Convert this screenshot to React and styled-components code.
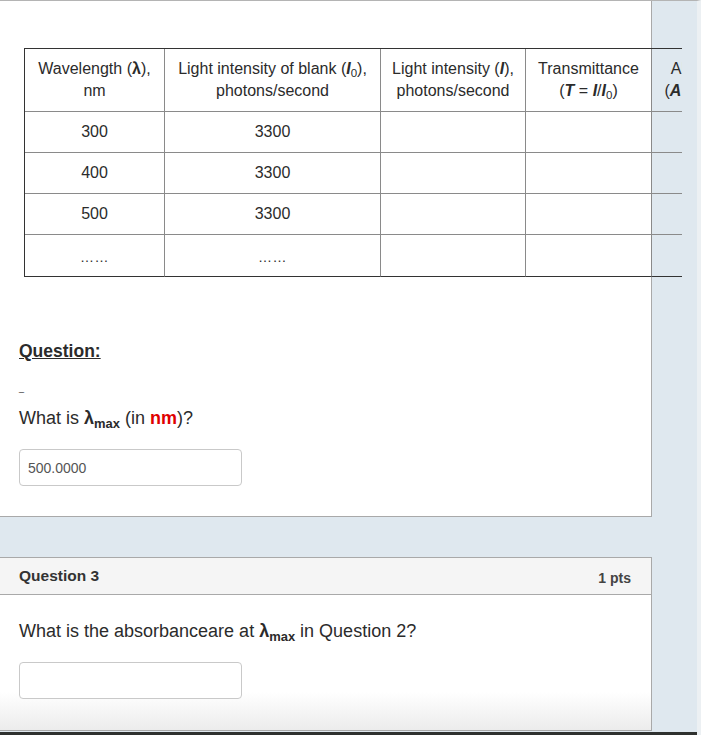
import React from 'react'
import styled, { createGlobalStyle } from 'styled-components'

const GlobalStyle = createGlobalStyle`
  html, body {
    margin: 0;
    padding: 0;
    background: #dfe8ef;
  }
  body {
    font-family: 'Liberation Sans', Arial, Helvetica, sans-serif;
    color: #2b2b2b;
  }
  * { box-sizing: border-box; }
`

const Page = styled.div`
  width: 701px;
  height: 735px;
  overflow: hidden;
  border-top: 1px solid #b4b4b4;
  border-right: 4px solid #ecf0f3;
  display: flex;
  flex-direction: column;
`

const Card = styled.div`
  width: 652px;
  background: #fff;
  border-right: 1px solid #a9a9a9;
  border-bottom: 1px solid #a9a9a9;
  border-top: ${p => (p.$top ? '1px solid #a9a9a9' : 'none')};
  margin-top: ${p => p.$gap || 0}px;
`

const CardBody = styled.div`
  padding: ${p => p.$pad};
  background: ${p => p.$fade ? 'linear-gradient(to bottom, #fff 0%, #fff 72%, #ececec 100%)' : '#fff'};
`

const TableClip = styled.div`
  margin: 47px 0 0 5px;
  width: 658px;
  overflow: hidden;
`

const Table = styled.table`
  width: 752px;
  table-layout: fixed;
  border-collapse: separate;
  border-spacing: 0;
  border-left: 1px solid #333;
  border-top: 1px solid #333;
  font-size: 16px;
  line-height: 22px;
  color: #2b2b2b;
`

const Th = styled.th`
  font-weight: normal;
  height: 63px;
  padding: 0 4px;
  text-align: center;
  vertical-align: middle;
  white-space: nowrap;
  border-right: 1px solid #8a8a8a;
  border-bottom: 1px solid #8a8a8a;
`

const Td = styled.td`
  height: ${p => (p.$last ? 42 : 41)}px;
  padding: 0 4px;
  text-align: center;
  vertical-align: middle;
  border-right: 1px solid #8a8a8a;
  border-bottom: 1px solid ${p => (p.$last ? '#333' : '#8a8a8a')};
`

const Dots = styled.span`
  font-size: 14px;
  letter-spacing: 0.5px;
  position: relative;
  top: 1px;
`

const Sym = styled.b`
  font-style: ${p => (p.$italic ? 'italic' : 'normal')};
`

const Sub = styled.sub`
  font-size: 0.72em;
  font-weight: ${p => (p.$bold ? 'bold' : 'normal')};
  vertical-align: -0.3em;
  line-height: 0;
`

const Heading = styled.p`
  margin: 62px 0 0;
  font-size: 17.5px;
  line-height: 24px;
  font-weight: bold;
  text-decoration: underline;
`

const Dash = styled.p`
  margin: 20px 0 0;
  font-size: 9px;
  line-height: 10px;
  height: 10px;
`

const Prompt = styled.p`
  margin: ${p => p.$top}px 0 0;
  font-size: 18px;
  line-height: 24px;
`

const Red = styled.b`
  color: #e00000;
`

const Answer = styled.div`
  margin-top: 19px;
  width: 223px;
  height: 37px;
  border: 1px solid #c9c9c9;
  border-radius: 4px;
  background: #fff;
  padding: 0 8px;
  display: flex;
  align-items: center;
  font-size: 14px;
  color: #555;
`

const QHeader = styled.div`
  height: 37px;
  background: #f5f5f5;
  border-bottom: 1px solid #a9a9a9;
  padding: 0 20px 0 19px;
  display: flex;
  align-items: center;
  justify-content: space-between;
`

const QTitle = styled.span`
  font-size: 15.5px;
  font-weight: bold;
  color: #333;
`

const Pts = styled.span`
  font-size: 14px;
  font-weight: bold;
  color: #444;
  margin-top: 3px;
`

const BottomBar = styled.div`
  margin-top: 1px;
  height: 4px;
  width: 705px;
  background: #2f312f;
`

const rows = [
  ['300', '3300'],
  ['400', '3300'],
  ['500', '3300'],
]

const DataTable = () => (
  <TableClip>
    <Table>
      <colgroup>
        <col style={{ width: 140 }} />
        <col style={{ width: 216 }} />
        <col style={{ width: 145 }} />
        <col style={{ width: 126 }} />
        <col style={{ width: 124 }} />
      </colgroup>
      <thead>
        <tr>
          <Th>Wavelength (<Sym>λ</Sym>),<br />nm</Th>
          <Th>Light intensity of blank (<Sym $italic>I</Sym><Sub>0</Sub>),<br />photons/second</Th>
          <Th>Light intensity (<Sym $italic>I</Sym>),<br />photons/second</Th>
          <Th>Transmittance<br />(<Sym $italic>T</Sym> = <Sym $italic>I</Sym>/<Sym $italic>I</Sym><Sub>0</Sub>)</Th>
          <Th>Absorbance<br />(<Sym $italic>A</Sym> = −log<Sub>10</Sub> <Sym $italic>T</Sym>)</Th>
        </tr>
      </thead>
      <tbody>
        {rows.map(([w, b]) => (
          <tr key={w}>
            <Td>{w}</Td>
            <Td>{b}</Td>
            <Td />
            <Td />
            <Td />
          </tr>
        ))}
        <tr>
          <Td $last><Dots>……</Dots></Td>
          <Td $last><Dots>……</Dots></Td>
          <Td $last />
          <Td $last />
          <Td $last />
        </tr>
      </tbody>
    </Table>
  </TableClip>
)

export default function App () {
  return (
    <>
      <GlobalStyle />
      <Page>
        <Card>
          <CardBody $pad='0 0 30px 19px'>
            <DataTable />
            <Heading>Question:</Heading>
            <Dash>_</Dash>
            <Prompt $top={13}>
              What is <b>λ</b><Sub $bold>max</Sub> (in <Red>nm</Red>)?
            </Prompt>
            <Answer>500.0000</Answer>
          </CardBody>
        </Card>
        <Card $top $gap={40}>
          <QHeader>
            <QTitle>Question 3</QTitle>
            <Pts>1 pts</Pts>
          </QHeader>
          <CardBody $pad='24px 0 31px 19px' $fade>
            <Prompt $top={0}>
              What is the absorbanceare at <b>λ</b><Sub $bold>max</Sub> in Question 2?
            </Prompt>
            <Answer />
          </CardBody>
        </Card>
        <BottomBar />
      </Page>
    </>
  )
}
